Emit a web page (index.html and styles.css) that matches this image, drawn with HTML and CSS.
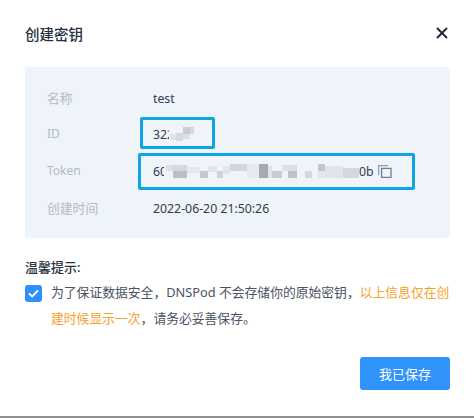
FILE: index.html
```html
<!DOCTYPE html>
<html lang="zh-CN">
<head>
  <meta charset="UTF-8">
  <meta name="viewport" content="width=device-width, initial-scale=1.0">
  <title>创建密钥</title>
  <link rel="stylesheet" href="styles.css">
</head>
<body>
<div class="dialog">
  <div class="dialog-header">
    <h1>创建密钥</h1>
    <svg class="close-icon" width="12" height="12" viewBox="0 0 12 12">
      <path d="M1 1L11 11M11 1L1 11" stroke="#1d2738" stroke-width="1.9" fill="none"/>
    </svg>
  </div>

  <div class="info-panel">
    <div class="info-row">
      <span class="info-label">名称</span>
      <span class="info-value">test</span>
    </div>
    <div class="info-row">
      <span class="info-label latin">ID</span>
      <span class="info-value">
        322
        <svg class="mosaic mosaic-id" width="25" height="16" viewBox="0 0 25 16">
          <rect x="0" y="0" width="25" height="16" fill="#eff4fb"/>
          <rect x="1" y="7" width="6" height="6" fill="#dfe2e8"/>
          <rect x="7" y="6" width="7" height="8" fill="#d5d8de"/>
          <rect x="14" y="0" width="7" height="7" fill="#c9ccd3"/>
          <rect x="14" y="7" width="7" height="5" fill="#dcdfe5"/>
          <rect x="21" y="0" width="4" height="7" fill="#d5d8de"/>
        </svg>
      </span>
      <div class="callout callout-id"></div>
    </div>
    <div class="info-row">
      <span class="info-label latin">Token</span>
      <span class="info-value">
        60
        <svg class="mosaic mosaic-token" width="195" height="16" viewBox="0 0 195 16">
          <rect x="0" y="0" width="195" height="16" fill="#eff4fb"/>
          <rect x="2" y="2" width="7" height="6" fill="#dcdfe5"/>
          <rect x="9" y="2" width="14" height="6" fill="#d6d9df"/>
          <rect x="9" y="8" width="14" height="7" fill="#bcbfc6"/>
          <rect x="23" y="4" width="13" height="6" fill="#e6e8ed"/>
          <rect x="36" y="8" width="8" height="7" fill="#c6c9cf"/>
          <rect x="44" y="3" width="9" height="6" fill="#e2e4e9"/>
          <rect x="53" y="8" width="6" height="7" fill="#cfd2d8"/>
          <rect x="59" y="3" width="7" height="8" fill="#e4e6eb"/>
          <rect x="66" y="1" width="17" height="7" fill="#d3d6dc"/>
          <rect x="83" y="1" width="12" height="14" fill="#e8eaef"/>
          <rect x="95" y="1" width="9" height="14" fill="#a7aab1"/>
          <rect x="104" y="3" width="4" height="12" fill="#e0e3e8"/>
          <rect x="108" y="8" width="10" height="7" fill="#c8cbd1"/>
          <rect x="118" y="2" width="15" height="6" fill="#dcdfe4"/>
          <rect x="124" y="8" width="9" height="7" fill="#bfc2c9"/>
          <rect x="141" y="8" width="7" height="7" fill="#d4d7dc"/>
          <rect x="154" y="1" width="7" height="7" fill="#c3c6cc"/>
          <rect x="154" y="8" width="7" height="7" fill="#e4e6eb"/>
          <rect x="161" y="3" width="18" height="12" fill="#e2e4e9"/>
          <rect x="179" y="5" width="16" height="10" fill="#d5d8dd"/>
        </svg>
        0b
        <svg class="copy-icon" width="14" height="13" viewBox="0 0 14 13">
          <path d="M0.7 10V0.7H10" stroke="#8f9bb0" stroke-width="1.2" fill="none"/>
          <rect x="3.6" y="3.4" width="9.4" height="9" stroke="#6f7f99" stroke-width="1.3" fill="none"/>
        </svg>
      </span>
      <div class="callout callout-token"></div>
    </div>
    <div class="info-row">
      <span class="info-label">创建时间</span>
      <span class="info-value">2022-06-20 21:50:26</span>
    </div>
  </div>

  <div class="notice">
    <div class="notice-title">温馨提示:</div>
    <div class="notice-body">
      <span class="checkbox">
        <svg width="11" height="9" viewBox="0 0 11 9">
          <path d="M1 4.5L4.2 7.4L10 1.4" stroke="#fff" stroke-width="2" fill="none"/>
        </svg>
      </span>
      <p>为了保证数据安全，DNSPod 不会存储你的原始密钥，<span class="warn">以上信息仅在创建时候显示一次</span>，请务必妥善保存。</p>
    </div>
  </div>

  <div class="dialog-footer">
    <button class="save-btn">我已保存</button>
  </div>
</div>
</body>
</html>
```

FILE: styles.css
```css
body {
  font-family: "Noto Sans", "Noto Sans CJK SC", sans-serif;
  margin: 0;
  padding: 0;
  background-color: #8f8f8f;
}

.dialog {
  box-sizing: border-box;
  height: 416px;
  padding: 23px 24px 0 25px;
  background-color: #ffffff;
}

.dialog-header {
  display: flex;
  justify-content: space-between;
  align-items: center;
  height: 20px;
  padding-right: 2px;
  margin-bottom: 24px;
}

h1 {
  margin: 0;
  font-size: 14.5px;
  font-weight: 500;
  color: #262f40;
}

.info-panel {
  height: 171px;
  box-sizing: border-box;
  padding: 13px 22px 0;
  background-color: #eff4fb;
  border-radius: 3px;
}

.info-row {
  position: relative;
  display: flex;
  align-items: center;
  height: 36.6px;
  font-size: 12.3px;
}

.info-label {
  width: 106px;
  font-size: 12.8px;
  line-height: 16px;
  margin-top: -1px;
  color: #b4bac6;
}

.info-label.latin {
  font-size: 12px;
}

.info-value {
  display: flex;
  align-items: center;
  color: #333b4b;
}

.mosaic {
  flex: none;
}

.mosaic-id {
  margin-left: -5px;
}

.mosaic-token {
  margin-left: -3px;
}

.copy-icon {
  margin-left: 4px;
}

/* blue marker boxes drawn over the screenshot */
.callout {
  position: absolute;
  box-sizing: border-box;
  border: 3px solid #0ea5e2;
  border-radius: 2px;
}

.callout-id {
  left: 93px;
  top: 0;
  width: 75px;
  height: 32px;
}

.callout-token {
  left: 91px;
  top: 0;
  width: 277px;
  height: 37px;
}

.notice {
  margin-top: 20px;
}

.notice-title {
  font-size: 13px;
  font-weight: 500;
  line-height: 18px;
  color: #2b3443;
}

.notice-body {
  display: flex;
  margin-top: 3px;
}

.checkbox {
  flex: none;
  display: flex;
  align-items: center;
  justify-content: center;
  width: 17px;
  height: 17px;
  margin-top: 6px;
  margin-right: 9px;
  background-color: #2f8ffc;
  border-radius: 3px;
}

.notice-body p {
  margin: 0 -4px 0 0;
  font-size: 12.8px;
  line-height: 26px;
  color: #4b5363;
}

.warn {
  color: #f7a12c;
}

.dialog-footer {
  display: flex;
  justify-content: flex-end;
  margin-top: 26px;
}

.save-btn {
  width: 90px;
  height: 33px;
  padding: 0;
  font-family: inherit;
  font-size: 13px;
  color: white;
  background-color: #2f93fb;
  border: none;
  border-radius: 3px;
}
```
